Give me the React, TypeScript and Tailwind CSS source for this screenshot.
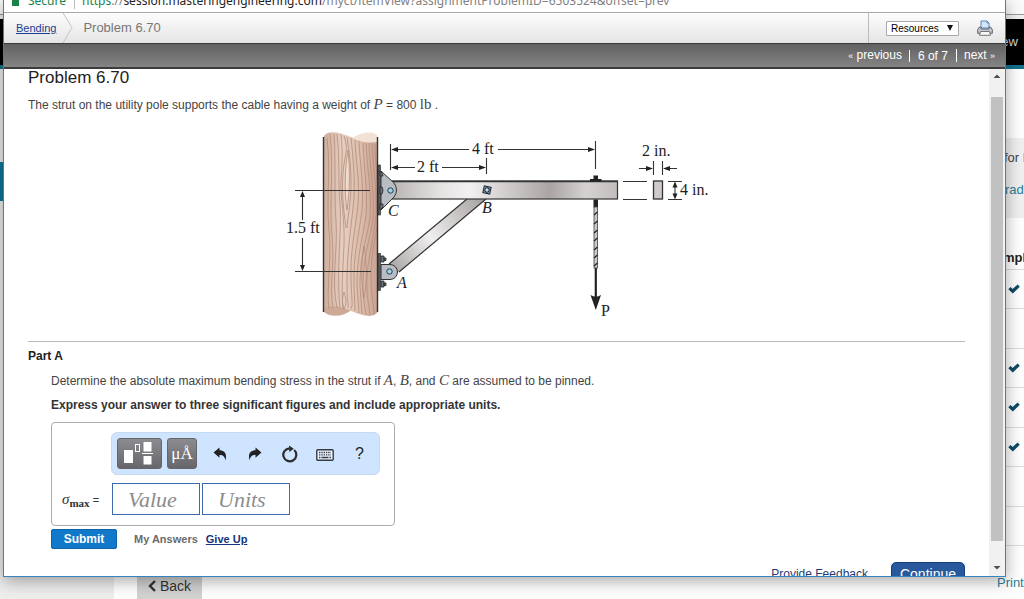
import React from "react";

const sans = "font-['Liberation_Sans',Arial,sans-serif]";
const serif = "font-['Liberation_Serif','Times_New_Roman',serif]";

const checkedRows = [true, false, true, true, true, false, false];

function Check() {
  return (
    <svg viewBox="0 0 12 10" className="h-[10px] w-3" aria-hidden="true">
      <path d="M0.3 5.2 L2.6 3 L4.6 5 L9.6 0.6 L11.8 2.8 L4.8 9.6 Z" fill="#0d4a66" />
    </svg>
  );
}

function CoursePage() {
  return (
    <div className="flex h-full flex-col bg-white">
      <div className="h-[15px] shrink-0 border-b border-[#999] bg-[#fafafa]" />
      <div className="h-1 shrink-0 bg-[#f0f0f0]" />
      <div className="flex h-[50px] shrink-0 items-center justify-end border-b-4 border-[#12728a] bg-black pr-[6px] text-[13px] text-[#d8d8d8]">
        <span>View</span>
      </div>
      <div className="flex min-h-0 flex-1">
        <nav className="w-[114px] bg-[#eeeeee] pt-[93px]">
          <div className="h-[39px] bg-[#0e7799]" />
        </nav>
        <main className="flex flex-1 flex-col justify-end pl-[23px]">
          <button className="flex h-[34px] w-[65px] items-end justify-center gap-1 bg-[#d2d2d2] pb-[5px] text-[14px] leading-4 text-[#333]">
            <svg viewBox="0 0 8 12" className="mb-[2px] h-3 w-2" aria-hidden="true">
              <path d="M7 1 L2 6 L7 11" fill="none" stroke="#333" strokeWidth="2.4" />
            </svg>
            Back
          </button>
        </main>
        <aside className="w-[27px] overflow-hidden whitespace-nowrap pt-[69px] text-[13px]">
          <div className="h-20 bg-[#f0f0f0] pl-[7px] pt-2 text-[#444]">
            <p className="leading-6">for L</p>
            <a href="#grades" className="mt-2 block pl-px leading-6 text-[#2a7f97]">
              rade
            </a>
          </div>
          <p className="mt-[30px] h-[21px] pl-[6px] font-bold leading-5 text-[#222]">mpl</p>
          <ul className="flex h-[277px] flex-col border-t border-[#ddd]">
            {checkedRows.map((checked, i) => (
              <li key={i} className="flex flex-1 items-center border-b border-[#ddd] pl-[11px]">
                {checked && <Check />}
              </li>
            ))}
          </ul>
          <a href="#print" className="mt-[27px] block leading-5 text-[#2a7f97]">
            Print
          </a>
        </aside>
      </div>
    </div>
  );
}

function PrinterIcon() {
  return (
    <svg viewBox="0 0 16 16" className="h-4 w-4" aria-hidden="true">
      <path d="M4 8 V1 H10 L12 3 V8 Z" fill="#d3e7fa" stroke="#5b87b5" />
      <path d="M10 1 V3 H12" fill="none" stroke="#5b87b5" />
      <path d="M2.500 7 H4 V9 H12 V7 H13.500 L15.300 9.500 V13.300 H0.700 V9.500 Z" fill="#c4c7cf" stroke="#5d636d" strokeLinejoin="round" />
      <path d="M3.500 11.500 H12.500 L13.500 15.300 H2.500 Z" fill="#f7f7f7" stroke="#777" />
    </svg>
  );
}

const grain = [
  "M326 138 C330 170 325 200 328 230 S325 290 328 309",
  "M329 134 C333 170 328 205 331 235 S328 285 332 308",
  "M333 134 C335 165 333 195 335 222 S330 280 336 308",
  "M336 134 C339 160 337 180 339 205 S335 270 339 308",
  "M340 134 C342 152 341 166 340 180 S344 220 343 245 S340 290 342 309",
  "M343 136 C346 145 346 150 344 158 C340 180 341 200 345 228",
  "M346 137 C348 150 350 165 350 184 C350 202 347 214 346 228",
  "M350 138 C352 156 354 178 353 198 C351 222 346 250 346 280 S348 300 347 308",
  "M354 140 C355 165 359 182 357 205 C354 232 349 252 350 280 S352 302 350 309",
  "M358 141 C359 165 363 185 361 210 C358 235 352 255 353 285 L354 311",
  "M362 143 C363 168 367 192 365 216 C362 236 356 256 356 284 L358 313",
  "M365 143 C366 170 371 190 369 218 C366 238 359 254 359 286 L361 314",
  "M368 143 C369 172 374 196 372 220 C369 238 363 254 362 280 C361 296 364 306 365 315",
  "M371 143 C372 170 376 185 375 215 C373 238 367 256 366 278 C365 294 368 305 369 315",
  "M374 144 C374 160 376 172 376 180",
  "M376 228 C373 242 370 258 370 276 C370 294 373 306 373 315",
  "M363 246 C360 262 360 282 363 298 C366 282 366 264 363 246",
  "M343 292 C341 298 341 304 343 309 C346 304 345 298 343 292",
];

function Arrow({ x, y, dir }: { x: number; y: number; dir: "l" | "r" | "u" | "d" }) {
  const d = {
    l: `M${x} ${y} l7 -2.500 v5 Z`,
    r: `M${x} ${y} l-7 -2.500 v5 Z`,
    u: `M${x} ${y} l-2.500 6 h5 Z`,
    d: `M${x} ${y} l-2.500 -6 h5 Z`,
  }[dir];
  return <path d={d} fill="#222" />;
}

function StrutFigure() {
  return (
    <svg
      viewBox="276 130 440 190"
      className="mx-auto mt-[13px] block h-[190px] w-[440px]"
      role="img"
      aria-label="Strut on a utility pole with loads and dimensions"
    >
      <defs>
        <linearGradient id="wood" x1="0" x2="1" y1="0" y2="0">
          <stop offset="0" stopColor="#cfae9c" />
          <stop offset="0.35" stopColor="#e6cfc0" />
          <stop offset="0.7" stopColor="#dcbcab" />
          <stop offset="1" stopColor="#c9a391" />
        </linearGradient>
        <linearGradient id="beam" x1="0" x2="1" y1="0" y2="0">
          <stop offset="0" stopColor="#b9b4b4" />
          <stop offset="0.22" stopColor="#e6e3e3" />
          <stop offset="0.34" stopColor="#f3f1f1" />
          <stop offset="0.5" stopColor="#d3cfcf" />
          <stop offset="0.7" stopColor="#aaa4a4" />
          <stop offset="0.86" stopColor="#d6d2d2" />
          <stop offset="1" stopColor="#c2bdbd" />
        </linearGradient>
        <linearGradient id="brace" gradientUnits="userSpaceOnUse" x1="393" y1="272" x2="478" y2="200">
          <stop offset="0" stopColor="#aaa5a5" />
          <stop offset="0.45" stopColor="#f0eeee" />
          <stop offset="1" stopColor="#aca7a7" />
        </linearGradient>
      </defs>

      <path d="M350 139 C358 133 370 130 376 135 V146 H350 Z" fill="#f2e2d6" />
      <path d="M323 300 V312 C330 318 342 317 352 309 V300 Z" fill="#cda996" />
      <path
        d="M323 136 C327 130 338 132 350 137 C360 143 370 143 376 142 V313 C370 318 362 316 350 311 C340 306 330 305 323 308 Z"
        fill="url(#wood)"
      />
      <g fill="none" stroke="#b48d7b" strokeWidth="0.8">
        {grain.map((d) => (
          <path key={d} d={d} />
        ))}
        <path d="M347 150 C344 168 343 190 346 210 C349 190 349 168 347 150" fill="#f0dccb" />
      </g>
      <path d="M322.500 137 V312 M376.500 137 V312" stroke="#333" strokeWidth="1.4" />

      <path d="M388 264 L466 199 H485 L398 272 Z" fill="url(#brace)" />
      <path d="M388 264 L466 199 M398 272 L485 199" stroke="#333" strokeWidth="1.2" />
      <rect x="391" y="181" width="225.500" height="18" fill="url(#beam)" stroke="#333" strokeWidth="1.2" />
      <path d="M391 181.500 H617" stroke="#333" strokeWidth="1.6" />

      <rect x="377" y="165" width="2.500" height="50" fill="#555b60" stroke="#222" strokeWidth="0.6" />
      <path d="M380 171 L393 183 Q398 190 393 197 L380 210 Z" fill="#b9bdc3" stroke="#333" />
      <path d="M379 171 q3 2 3 5 h-3 Z M379 187 h2 q2 3 0 7 h-2 Z M379 204 h3 v3 l-3 3 Z" fill="#6e757c" stroke="#222" strokeWidth="0.8" />
      <circle cx="389.500" cy="190.500" r="2.700" fill="#9fd0e4" stroke="#1d3f50" />

      <rect x="377" y="253.500" width="2.500" height="37" fill="#555b60" stroke="#222" strokeWidth="0.6" />
      <path d="M380 264.500 H389 A7 7 0 0 1 389 279.500 H380 Z" fill="#b9bdc3" stroke="#333" />
      <path d="M380 256 h3 v6 h-3 Z M383 258 h2 v2.500 h-2 Z M380 281 h3 v6 h-3 Z M383 283 h2 v2.500 h-2 Z" fill="#6e757c" stroke="#222" strokeWidth="0.8" />
      <circle cx="388.500" cy="271.500" r="2.700" fill="#9fd0e4" stroke="#1d3f50" />

      <g transform="rotate(12 486 190)">
        <rect x="482.500" y="186.500" width="7" height="7" fill="#8db4c5" stroke="#223" />
        <circle cx="486" cy="190" r="2.200" fill="#c1dce7" stroke="#223" />
      </g>

      <g stroke="#333" strokeWidth="1.1" fill="none">
        <path d="M389.500 144 V170 M485.500 158 V174 M594.500 141 V169" />
        <path d="M392 149.500 H468 M497 149.500 H593 M392 167.500 H414 M441 167.500 H484" />
        <path d="M294 190.500 H369 M294 271.500 H370 M301.500 193 V220 M301.500 238 V270" />
        <path d="M622 181.500 H646 M622 199.500 H646 M667 181.500 H681 M667 199.500 H681 M674 183 V197" />
        <path d="M652.500 161 V175 M661.500 161 V175 M638 168.500 H651 M663 168.500 H676" />
      </g>
      <Arrow x={390} y={149.5} dir="l" />
      <Arrow x={594} y={149.5} dir="r" />
      <Arrow x={390} y={167.5} dir="l" />
      <Arrow x={485} y={167.5} dir="r" />
      <Arrow x={301.5} y={191} dir="u" />
      <Arrow x={301.5} y={271} dir="d" />
      <Arrow x={652} y={168.5} dir="r" />
      <Arrow x={662} y={168.5} dir="l" />
      <Arrow x={674} y={181.5} dir="u" />
      <Arrow x={674} y={199.5} dir="d" />
      <rect x="652.500" y="181" width="9" height="18" fill="#cfcaca" stroke="#333" strokeWidth="1.3" />

      <path d="M592.500 175.500 h4.500 v3.500 h3.500 v2.500 h-11.500 v-2.500 h3.500 Z M592.500 199.500 h4.500 v8 h-4.500 Z" fill="#222" />
      <rect x="593" y="207" width="3.500" height="61" fill="#c8c8c8" stroke="#444" strokeWidth="0.8" />
      <path
        d="M593 215 l3.500 -3 M593 224 l3.500 -3 M593 233 l3.500 -3 M593 241 l3.500 -3 M593 250 l3.500 -3 M593 258 l3.500 -3 M593 266 l3.500 -3"
        stroke="#222"
        strokeWidth="1.2"
      />
      <path d="M594.800 268 V300" stroke="#222" strokeWidth="2.200" />
      <path d="M589.500 295 Q595 298.500 600 295 L594.800 310 Z" fill="#222" />

      <g className={serif} fontSize="16" fill="#222">
        <text x="471" y="154">4 ft</text>
        <text x="416" y="172">2 ft</text>
        <text x="285" y="233">1.5 ft</text>
        <text x="641" y="156">2 in.</text>
        <text x="679" y="195">4 in.</text>
        <text x="387" y="216" fontStyle="italic">C</text>
        <text x="481" y="213" fontStyle="italic">B</text>
        <text x="396" y="288" fontStyle="italic">A</text>
        <text x="600" y="316">P</text>
      </g>
    </svg>
  );
}

function Toolbar() {
  const plain = "flex h-8 w-[35px] items-center justify-center";
  const dark = "flex h-[31px] items-center justify-center rounded-[3px] border border-[#66666a] bg-linear-to-b from-[#8b8b90] to-[#66666b]";
  return (
    <div className="flex h-[43px] items-center rounded-md border border-[#c3daf0] bg-[#cfe5ff] pl-[5px]">
      <button aria-label="Templates" className={`${dark} w-[45px]`}>
        <svg viewBox="0 0 34 26" className="h-[26px] w-[34px]">
          <rect x="1" y="9" width="9" height="13" fill="#fff" />
          <rect x="12.500" y="3.500" width="4" height="7" fill="none" stroke="#fff" />
          <path d="M20.500 1 h8 v9.500 h-8 Z M19 12 h11 v1 h-11 Z M20.500 15 h8 v8.500 h-8 Z" fill="#fff" />
        </svg>
      </button>
      <button aria-label="Symbols" className={`${dark} ml-[5px] mr-[5px] w-[30px] text-[17px] text-white ${serif}`}>
        μÅ
      </button>
      <button aria-label="Undo" className={plain}>
        <svg viewBox="0 0 14 14" className="h-[14px] w-[14px]">
          <path d="M0.500 5.500 L6.500 0.500 V3.300 C11.500 3.300 14.500 7 12.300 13.500 C12 10 10.500 8 6.500 8 V10.800 Z" fill="#222" />
        </svg>
      </button>
      <button aria-label="Redo" className={plain}>
        <svg viewBox="0 0 14 14" className="h-[14px] w-[14px]">
          <path d="M13.500 5.500 L7.500 0.500 V3.300 C2.500 3.300 -0.500 7 1.700 13.500 C2 10 3.500 8 7.500 8 V10.800 Z" fill="#222" />
        </svg>
      </button>
      <button aria-label="Reset" className={plain}>
        <svg viewBox="0 0 16 18" className="h-[18px] w-4">
          <path d="M12.200 5 A6.500 6.500 0 1 1 7.500 3.300" fill="none" stroke="#2c2c2c" strokeWidth="2.200" />
          <path d="M7 0.500 L11.800 3.800 L7.300 7 Z" fill="#2c2c2c" />
        </svg>
      </button>
      <button aria-label="Keyboard" className={plain}>
        <svg viewBox="0 0 18 12" className="mt-[3px] h-3 w-[18px]">
          <rect x="0.800" y="0.800" width="16.400" height="10.400" rx="1" fill="#eef5ff" stroke="#333b45" strokeWidth="1.400" />
          <path d="M3 3.500 H15 M3 5.800 H15" stroke="#333b45" strokeWidth="1.300" strokeDasharray="1.400 0.900" />
          <path d="M3 8.500 H4.500 M5.500 8.500 H12.500 M13.500 8.500 H15" stroke="#333b45" strokeWidth="1.300" />
        </svg>
      </button>
      <button aria-label="Help" className={`${plain} text-[16px] text-[#222]`}>
        ?
      </button>
    </div>
  );
}

function Scrollbar() {
  return (
    <div className="flex w-4 shrink-0 flex-col items-center bg-[#f1f1f1]" aria-hidden="true">
      <svg viewBox="0 0 16 28" className="h-7 w-4 shrink-0">
        <path d="M4.500 9 L8 5.500 L11.500 9 Z" fill="#505050" />
      </svg>
      <div className="w-3 flex-1 bg-[#c1c1c1]" />
      <svg viewBox="0 0 16 35" className="h-[35px] w-4 shrink-0">
        <path d="M4.500 25 L8 28.500 L11.500 25 Z" fill="#505050" />
      </svg>
    </div>
  );
}

function ProblemWindow() {
  const field = `h-8 w-[88px] border border-[#3d6aa8] bg-white pl-[15px] text-[22px] italic text-[#333] outline-none placeholder:text-[#8c8c8c] ${serif}`;
  return (
    <div className="flex h-full flex-col overflow-hidden border border-t-0 border-[#3983bd] bg-white">
      <div className="flex h-[13px] shrink-0 items-start overflow-hidden border-b border-[#a8a8a8] bg-white font-['Noto_Sans','Open_Sans',sans-serif] text-[12px] text-[#808080]">
        <div className="-mt-[7px] flex items-center leading-4">
          <span className="ml-2 h-[9px] w-[7px] bg-[#17834a]" />
          <span className="ml-[9px] w-[46px] text-[#17834a]">Secure</span>
          <span className="mr-[7px] h-4 w-px bg-[#bbb]" />
          <span className="whitespace-nowrap">
            <span className="text-[#17834a]">https</span>://<span className="text-[#222]">session.masteringengineering.com</span>
            /myct/itemView?assignmentProblemID=6503524&amp;offset=prev
          </span>
        </div>
      </div>

      <header className="flex h-[30px] shrink-0 items-stretch bg-linear-to-b from-[#fdfdfd] to-[#e5e5e5]">
        <nav className="flex flex-1 items-center pl-3">
          <a href="#bending" className="text-[11px] text-[#1b3f91] underline">
            Bending
          </a>
          <svg viewBox="0 0 12 30" className="mx-[6px] h-[30px] w-3" aria-hidden="true">
            <path d="M1 0 L10 14.500 L1 30" fill="none" stroke="#c4c4c4" />
          </svg>
          <span className="ml-[3px] text-[13px] text-[#777]">Problem 6.70</span>
        </nav>
        <div className="flex items-center border-l border-[#bbb] pl-[17px] pr-3">
          <div className="relative flex items-center">
            <select
              aria-label="Resources"
              className="h-[15px] w-[73px] appearance-none rounded-[1px] border border-[#a9a9a9] bg-white pl-[4px] text-[10px] leading-[13px] text-black"
            >
              <option>Resources</option>
            </select>
            <svg viewBox="0 0 6 6" className="pointer-events-none absolute right-[6px] h-[6px] w-[6px]" aria-hidden="true">
              <path d="M0 0 H6 L3 6 Z" fill="#111" />
            </svg>
          </div>
          <button aria-label="Print" className="ml-[18px]">
            <PrinterIcon />
          </button>
        </div>
      </header>

      <div className="flex h-[26px] shrink-0 items-center justify-end border-b-2 border-t border-[#3b3b3b] bg-linear-to-b from-[#606160] to-[#858585] pr-[10px] text-[12px] leading-3 text-white">
        <a href="#previous" className="pr-[7px]">
          <span className="text-[9px]">«</span> previous
        </a>
        <span className="border-l border-white px-2">6 of 7</span>
        <a href="#next" className="border-l border-white pl-[7px]">
          next <span className="text-[9px]">»</span>
        </a>
      </div>

      <div className="flex min-h-0 flex-1">
        <div className="min-w-0 flex-1 overflow-hidden px-6">
          <h1 className="text-[17px] leading-[18px] text-[#222]">Problem 6.70</h1>
          <p className="mt-[5px] text-[12px] leading-6 text-[#444]">
            The strut on the utility pole supports the cable having a weight of{" "}
            <span className={`text-[15px] italic ${serif}`}>P</span> = 800 <span className={`text-[15px] ${serif}`}>lb</span> .
          </p>
          <StrutFigure />
          <hr className="mt-[21px] border-[#b9b9b9]" />
          <h2 className="mt-1 text-[12px] font-bold leading-5 text-[#222]">Part A</h2>
          <section className="ml-[23px] mt-[2px]">
            <p className="text-[12px] leading-6 text-[#444]">
              Determine the absolute maximum bending stress in the strut if{" "}
              <span className={`text-[15px] italic ${serif}`}>A</span>, <span className={`text-[15px] italic ${serif}`}>B</span>, and{" "}
              <span className={`text-[15px] italic ${serif}`}>C</span> are assumed to be pinned.
            </p>
            <p className="text-[12px] font-bold leading-6 text-[#333]">
              Express your answer to three significant figures and include appropriate units.
            </p>
            <div className="mt-[5px] h-[104px] w-[344px] rounded-[4px] border border-[#ababab] pr-[14px] pt-[9px]">
              <div className="ml-[59px]">
                <Toolbar />
              </div>
              <div className="mt-2 flex items-center">
                <label htmlFor="value" className="w-[60px] pl-[10px] text-[11px] text-[#333]">
                  <span className={`text-[15px] italic ${serif}`}>σ</span>
                  <sub className={`text-[11px] font-bold ${serif}`}>max</sub> =
                </label>
                <input id="value" placeholder="Value" className={field} />
                <input aria-label="Units" placeholder="Units" className={`${field} ml-[2px]`} />
              </div>
            </div>
            <div className="mt-[3px] flex items-center text-[12px] font-bold leading-5">
              <button className="h-5 w-[66px] rounded-[2px] border border-[#0d62a8] bg-[#1079ca] leading-[18px] text-white">
                Submit
              </button>
              <span className="ml-[17px] text-[11px] text-[#6b6b6b]">My Answers</span>
              <a href="#give-up" className="ml-2 text-[11px] text-[#14367f] underline">
                Give Up
              </a>
            </div>
          </section>
          <footer className="mt-[13px] flex items-start justify-end">
            <a href="#feedback" className="mr-[23px] mt-1 text-[12px] leading-4 text-[#1f3a73]">
              Provide Feedback
            </a>
            <button className="h-7 w-[74px] rounded-[5px] border border-[#183f77] bg-[#29599d] pb-1 text-[14px] leading-5 text-white">
              Continue
            </button>
          </footer>
        </div>
        <Scrollbar />
      </div>
    </div>
  );
}

export default function App() {
  return (
    <div className={`relative h-screen overflow-hidden ${sans}`}>
      <CoursePage />
      <div className="absolute bottom-[22px] left-[3px] right-[18px] top-0 shadow-[0_4px_16px_rgba(0,0,0,0.35)]">
        <ProblemWindow />
      </div>
    </div>
  );
}
